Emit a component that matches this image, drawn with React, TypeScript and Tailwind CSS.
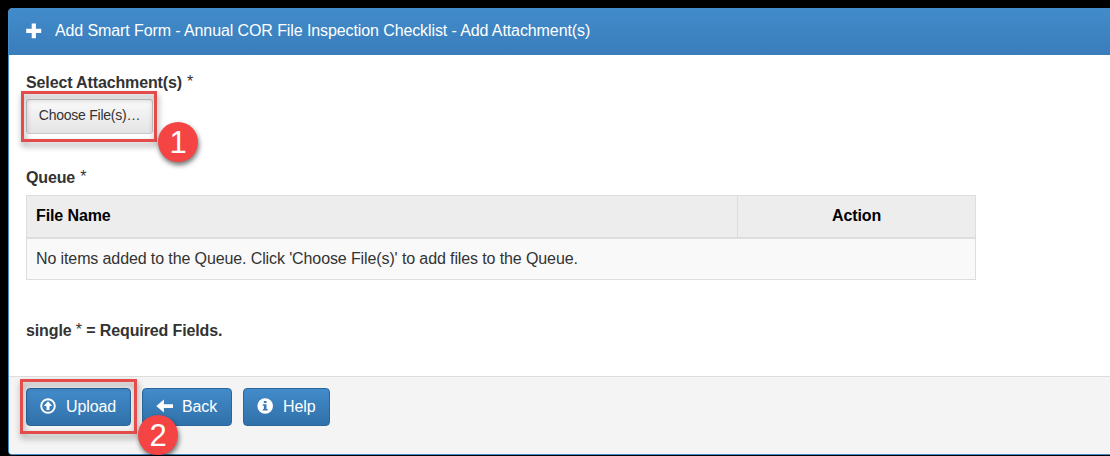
import type { ReactNode } from 'react';

function PlusIcon() {
  return (
    <svg width="16" height="16" viewBox="0 0 16 16" fill="#fff" className="shrink-0">
      <path d="M5.7.5h4.2v5.2h5.3v4.2H9.9v5.3H5.7V9.9H.2V5.7h5.5z" />
    </svg>
  );
}

function UploadIcon() {
  return (
    <svg width="16" height="16" viewBox="0 0 16 16" className="shrink-0">
      <circle cx="8" cy="8" r="6.8" fill="none" stroke="#fff" strokeWidth="1.9" />
      <path d="M8 3.3L12.1 8H9.5v4.1h-3V8H3.9z" fill="#fff" />
    </svg>
  );
}

function BackIcon() {
  return (
    <svg width="17" height="16" viewBox="0 0 17 16" fill="#fff" className="-mr-px shrink-0">
      <path d="M.3 8l7.6-6.4v4.6H17v3.7H7.9v4.5z" />
    </svg>
  );
}

function InfoIcon() {
  return (
    <svg width="16" height="16" viewBox="0 0 16 16" className="shrink-0">
      <circle cx="8.2" cy="8" r="7.8" fill="#fff" />
      <path d="M6.8 3h2.7v2H6.8zM5.8 6.2h3.7v4.9h1.1v1.5H5.8v-1.5h1.1V7.7H5.8z" fill="#3a79b6" />
    </svg>
  );
}

function ActionButton({ icon, label, width }: { icon: ReactNode; label: string; width: string }) {
  return (
    <button
      className={`${width} flex h-[38px] items-center gap-[10px] rounded border border-[#2b669a] bg-linear-to-b from-[#428bca] to-[#3071a9] pl-[13px] text-base tracking-[-0.1px] text-white`}
    >
      <span className="-mt-[3px]">{icon}</span>
      <span>{label}</span>
    </button>
  );
}

function Badge({ value, place }: { value: number; place: string }) {
  return (
    <div
      className={`${place} absolute z-20 flex size-10 items-center justify-center rounded-full bg-[#f44443] pt-px text-[31px] leading-none tracking-normal text-white shadow-[1px_3px_5px_rgba(0,0,0,0.55)]`}
    >
      {value}
    </div>
  );
}

function Highlight({ place }: { place: string }) {
  return (
    <div className={`${place} pointer-events-none absolute z-10 drop-shadow-[1px_4px_3px_rgba(0,0,0,0.4)]`}>
      <div className="size-full border-[3px] border-[#e44c4c]" />
    </div>
  );
}

function Label({ children }: { children: string }) {
  return (
    <div className="flex h-6 items-center gap-[5px] whitespace-nowrap font-bold tracking-[-0.13px]">
      <span>{children}</span>
      <span className="-mt-[2px] font-normal">*</span>
    </div>
  );
}

export default function App() {
  return (
    <div className="h-[456px] w-full overflow-hidden bg-black pl-2 pt-2 font-['Liberation_Sans',Arial,sans-serif] text-base tracking-[-0.11px] text-[#333]">
      <main className="flex h-[447px] w-[1120px] flex-col rounded border border-[#428bca] bg-white">
        <header className="flex h-[46px] shrink-0 items-center bg-linear-to-b from-[#428bca] to-[#397dbb] pl-[17px] text-white">
          <span className="-mt-[3px] mr-[13px]">
            <PlusIcon />
          </span>
          <h1 className="-mt-[3px] whitespace-nowrap tracking-[-0.1px]">
            Add Smart Form - Annual COR File Inspection Checklist - Add Attachment(s)
          </h1>
        </header>

        <section className="flex-1 pl-[17px] pt-4">
          <Label>Select Attachment(s)</Label>
          <div className="relative mt-1 w-[127px]">
            <button className="h-[35px] w-full rounded-[3px] border border-[#c8c8c8] bg-linear-to-b from-[#fafafa] to-[#e4e4e4] pb-[3px] text-sm tracking-[-0.24px]">
              Choose File(s)…
            </button>
            <Highlight place="-left-[5px] -top-2 h-[51px] w-[136px]" />
            <Badge value={1} place="left-[132px] top-[23px]" />
          </div>

          <div className="mt-8">
            <Label>Queue</Label>
          </div>
          <table className="mt-[5px] w-[950px] table-fixed border-collapse border border-[#ddd]">
            <colgroup>
              <col className="w-[711px]" />
              <col />
            </colgroup>
            <thead className="bg-[#ededed] text-black">
              <tr className="h-[42px]">
                <th className="border border-b-2 border-[#ddd] px-[9px] text-left">File Name</th>
                <th className="border border-b-2 border-[#ddd] text-center">Action</th>
              </tr>
            </thead>
            <tbody>
              <tr className="h-[42px] bg-[#f9f9f9]">
                <td colSpan={2} className="border border-[#ddd] px-[9px]">
                  No items added to the Queue. Click 'Choose File(s)' to add files to the Queue.
                </td>
              </tr>
            </tbody>
          </table>

          <p className="mt-[39px] font-bold tracking-[-0.12px]">
            single <span className="relative -top-px font-normal">*</span> = Required Fields.
          </p>
        </section>

        <footer className="h-[78px] shrink-0 rounded-b-[3px] border-t border-[#ddd] bg-[#f4f4f4] pl-[17px] pt-[11px]">
          <div className="relative flex gap-[11px]">
            <ActionButton icon={<UploadIcon />} label="Upload" width="w-[105px]" />
            <ActionButton icon={<BackIcon />} label="Back" width="w-[90px]" />
            <ActionButton icon={<InfoIcon />} label="Help" width="w-[87px]" />
            <Highlight place="-left-[6px] -top-[9px] h-[55px] w-[117px]" />
            <Badge value={2} place="left-[112px] top-[27px]" />
          </div>
        </footer>
      </main>
    </div>
  );
}
